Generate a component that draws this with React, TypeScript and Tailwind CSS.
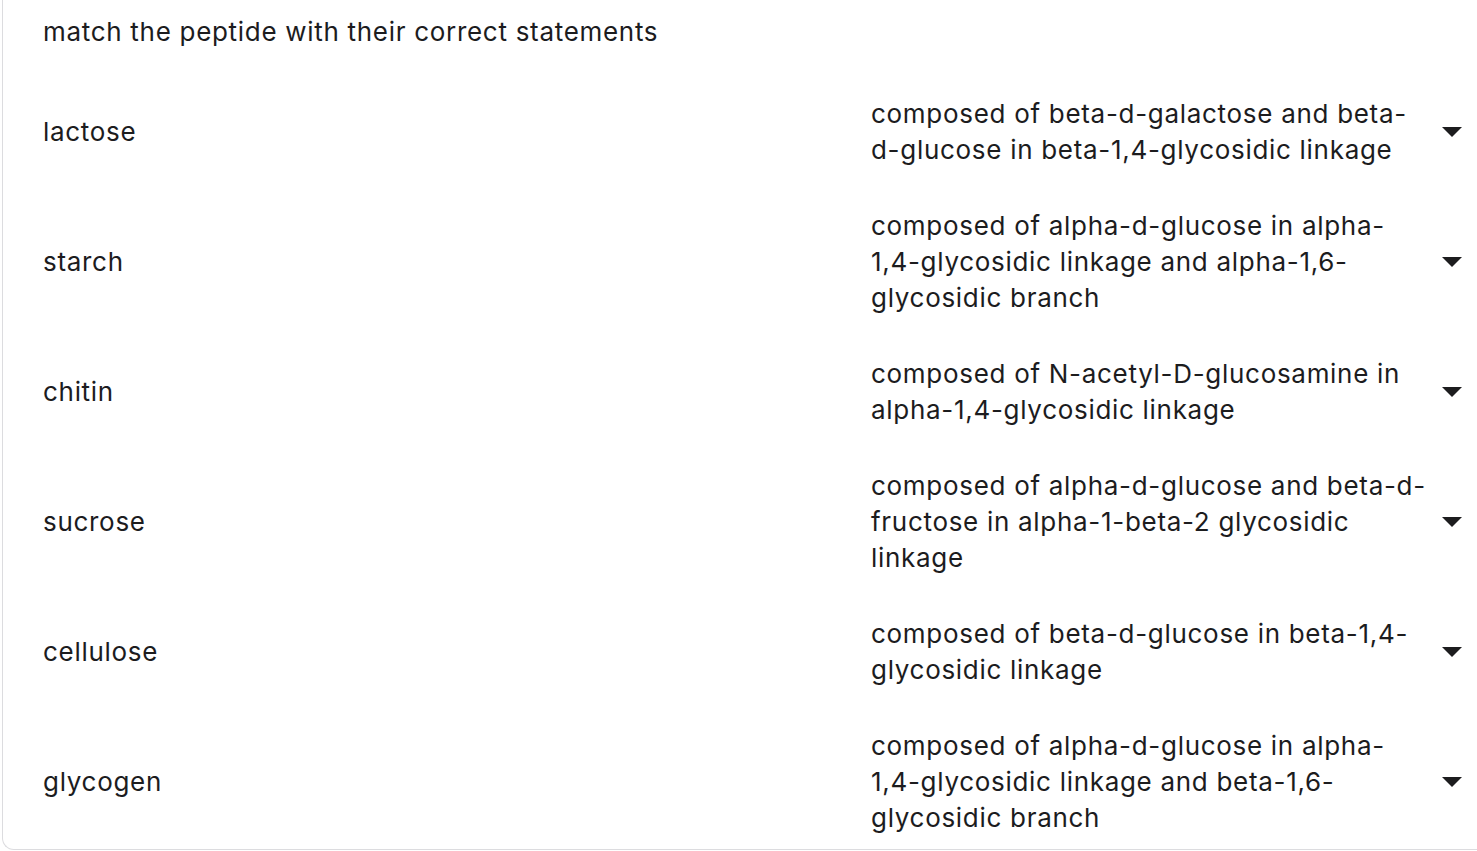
const rows: { name: string; answer: string }[] = [
  {
    name: "lactose",
    answer: "composed of beta-d-galactose and beta-d-glucose in beta-1,4-glycosidic linkage",
  },
  {
    name: "starch",
    answer:
      "composed of alpha-d-glucose in alpha-1,4-glycosidic linkage and alpha-1,6-glycosidic branch",
  },
  {
    name: "chitin",
    answer: "composed of N-acetyl-D-glucosamine in alpha-1,4-glycosidic linkage",
  },
  {
    name: "sucrose",
    answer: "composed of alpha-d-glucose and beta-d-fructose in alpha-1-beta-2 glycosidic linkage",
  },
  {
    name: "cellulose",
    answer: "composed of beta-d-glucose in beta-1,4-glycosidic linkage",
  },
  {
    name: "glycogen",
    answer:
      "composed of alpha-d-glucose in alpha-1,4-glycosidic linkage and beta-1,6-glycosidic branch",
  },
];

function Caret() {
  return (
    <svg width="20" height="10" viewBox="0 0 20 10" className="ml-[13px] shrink-0">
      <path d="M0 0 H20 L10 10 Z" fill="#1c1c1e" />
    </svg>
  );
}

export default function App() {
  return (
    <div className="min-h-screen bg-white font-['Inter',sans-serif] tracking-[0.7px] text-[#1c1c1e]">
      <div className="ml-[2px] h-[850px] rounded-bl-xl border-b border-l border-[#dcdcdf] pl-[40px] pt-[14px]">
        <h1 className="text-[26px] leading-[36px]">match the peptide with their correct statements</h1>
        <div className="mt-[17px] flex flex-col">
          {rows.map((r) => (
            <div key={r.name} className="flex h-[130px] items-center text-[26px] leading-[36px]">
              <div className="w-[828px] shrink-0">{r.name}</div>
              <div className="flex flex-1 items-center">
                <div className="w-[558px] shrink-0">{r.answer}</div>
                <Caret />
              </div>
            </div>
          ))}
        </div>
      </div>
    </div>
  );
}
